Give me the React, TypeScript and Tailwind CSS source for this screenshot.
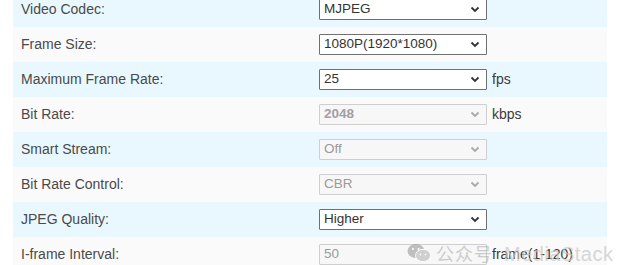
const rows = [
  { label: "Video Codec:", value: "MJPEG", disabled: false },
  { label: "Frame Size:", value: "1080P(1920*1080)", disabled: false },
  { label: "Maximum Frame Rate:", value: "25", disabled: false, unit: "fps" },
  { label: "Bit Rate:", value: "2048", disabled: true, unit: "kbps", bold: true },
  { label: "Smart Stream:", value: "Off", disabled: true },
  { label: "Bit Rate Control:", value: "CBR", disabled: true },
  { label: "JPEG Quality:", value: "Higher", disabled: false },
  { label: "I-frame Interval:", value: "50", disabled: true, unit: "frame(1-120)", input: true },
];

function Chevron({ disabled }: { disabled: boolean }) {
  return (
    <svg width="10" height="7" viewBox="0 0 10 7" className="shrink-0">
      <path
        d="M1.5 1.5 L5 5 L8.5 1.5"
        fill="none"
        stroke={disabled ? "#a9a9a9" : "#333"}
        strokeWidth="1.8"
      />
    </svg>
  );
}

function Select({ value, disabled, bold, input }: { value: string; disabled: boolean; bold?: boolean; input?: boolean }) {
  return (
    <div
      className={
        "flex items-center justify-between w-[168px] h-[21px] pl-[4px] pr-[6px] border rounded-[1px] text-[13.5px] " +
        (disabled ? "border-[#cfcfcf] bg-[#f7f7f7] text-[#9a9a9a]" : "border-[#707070] bg-white text-[#333]")
      }
    >
      <span className={bold ? "font-bold text-[#a0a0a0]" : ""}>{value}</span>
      {!input && <Chevron disabled={disabled} />}
    </div>
  );
}

export default function App() {
  return (
    <div className="relative w-[622px] h-[265px] overflow-hidden bg-white font-['Liberation_Sans',Arial,sans-serif] text-[14px]">
      <div className="ml-[13px] w-[594px] -mt-[8px] flex flex-col">
        {rows.map((r, i) => (
          <div
            key={r.label}
            className={"flex items-center h-[35px] " + (i % 2 === 0 ? "bg-[#e9f8fe]" : "bg-[#fafafa]")}
          >
            <div className="w-[306px] pl-[8px] text-[#4a4a4a]">{r.label}</div>
            <Select value={r.value} disabled={r.disabled} bold={r.bold} input={r.input} />
            {r.unit && <span className="ml-[5px] text-[#3a3a3a]">{r.unit}</span>}
          </div>
        ))}
      </div>
      {/* watermark */}
      <div className="absolute left-[407px] top-[242px] flex items-center gap-[5px] opacity-60 pointer-events-none">
        <svg width="24" height="20" viewBox="0 0 24 20">
          <ellipse cx="9" cy="8" rx="8.5" ry="7" fill="#9a9a9a" />
          <ellipse cx="16" cy="12.5" rx="7.5" ry="6.2" fill="#b5b5b5" stroke="#fff" strokeWidth="1" />
          <circle cx="6" cy="6" r="1.1" fill="#fff" />
          <circle cx="11.5" cy="6" r="1.1" fill="#fff" />
          <circle cx="13.5" cy="11.5" r="0.9" fill="#fff" />
          <circle cx="18.5" cy="11.5" r="0.9" fill="#fff" />
        </svg>
        <span className="text-[18px] leading-[22px] text-[#b0b0b0] font-['Noto_Sans_CJK_SC',sans-serif] tracking-[1px]">公众号</span>
      </div>
      <div className="absolute left-[504px] top-[242px] text-[20px] leading-[24px] text-[#c8c8c8] opacity-70 pointer-events-none tracking-[0.5px]">
        MediaStack
      </div>
    </div>
  );
}
